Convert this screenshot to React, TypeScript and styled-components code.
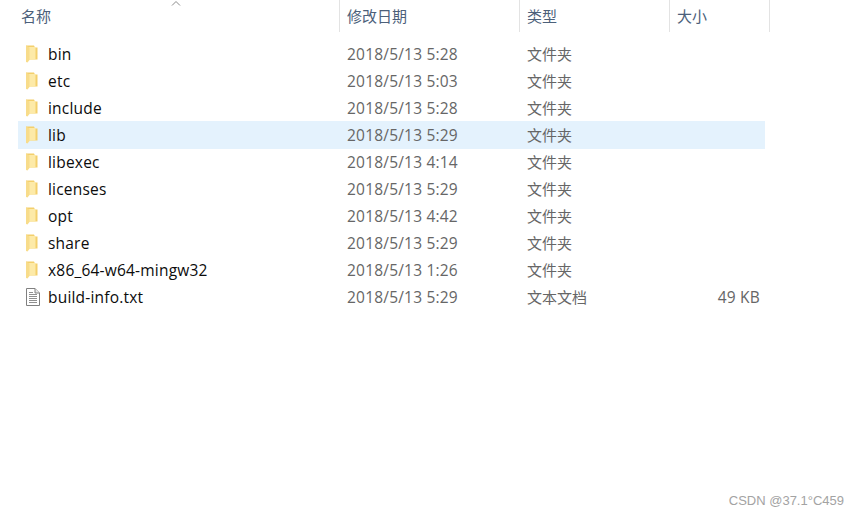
import styled, { createGlobalStyle } from "styled-components";

const GlobalStyle = createGlobalStyle`
  html, body {
    margin: 0;
    padding: 0;
    background: #ffffff;
  }
`;

const Page = styled.div`
  width: 859px;
  height: 515px;
  position: relative;
  overflow: hidden;
  background: #ffffff;
  font-family: "Open Sans", "Noto Sans CJK SC", sans-serif;
`;

const Header = styled.div`
  display: grid;
  grid-template-columns: 340px 180px 150px 100px;
  height: 32px;
`;

const HeaderCell = styled.div`
  border-right: 1px solid #e3e3e3;
  padding: 6px 0 0 7px;
  font-size: 15px;
  line-height: 20px;
  color: #4c607a;
`;

const FirstHeaderCell = styled(HeaderCell)`
  padding-left: 21px;
  position: relative;
`;

const SortArrow = styled.svg`
  position: absolute;
  left: 171px;
  top: 0;
`;

const List = styled.div`
  padding: 8px 0 0 18px;
  width: 747px;
`;

const Row = styled.div<{ $selected?: boolean }>`
  display: grid;
  grid-template-columns: 322px 180px 150px 95px;
  height: 27px;
  align-items: center;
  background: ${(props) => (props.$selected ? "#e4f2fd" : "transparent")};
  box-shadow: ${(props) => (props.$selected ? "0 1px 0 #e4f2fd" : "none")};
`;

const NameCell = styled.div`
  display: flex;
  align-items: center;
  gap: 8px;
  padding-left: 6px;
  font-size: 15.5px;
  letter-spacing: 0.2px;
  color: #0c0c0c;
`;

const InfoCell = styled.div`
  padding-left: 7px;
  font-size: 15.5px;
  letter-spacing: 0.2px;
  color: #666666;
`;

const TypeCell = styled(InfoCell)`
  font-size: 15px;
  letter-spacing: 0;
`;

const SizeCell = styled(InfoCell)`
  padding: 0 5px 0 0;
  text-align: right;
`;

const Watermark = styled.div`
  position: absolute;
  right: 15px;
  bottom: 6px;
  font-family: "Liberation Sans", sans-serif;
  font-size: 13px;
  line-height: 16px;
  color: #a3a3a3;
`;

const FolderIcon = () => (
  <svg width="16" height="18" viewBox="0 0 16 18">
    <path d="M2 .5 H10 L11 2.5 H13.5 V14.5 H2 Z" fill="#f3cf6c" />
    <path d="M4.5 2 H11.5 V14.5 H4.5 Z" fill="#fdeaa8" />
    <path d="M2 .5 L5.5 2.5 V15 L3.5 17.5 L2 17 Z" fill="#f8dc8a" />
  </svg>
);

const FileIcon = () => (
  <svg width="16" height="18" viewBox="0 0 16 18">
    <path d="M2.5 .5 H11 L15.5 5 V17.5 H2.5 Z" fill="#ffffff" stroke="#808080" />
    <path d="M11 .5 V5 H15.5" fill="#e8e8e8" stroke="#808080" />
    <path
      d="M5 4.5 H9 M5 6.5 H13 M5 8.5 H13 M5 10.5 H13 M5 12.5 H13 M5 14.5 H13"
      stroke="#8f8f8f"
    />
  </svg>
);

type Item = {
  name: string;
  date: string;
  type: string;
  size?: string;
  file?: boolean;
};

const items: Item[] = [
  { name: "bin", date: "2018/5/13 5:28", type: "文件夹" },
  { name: "etc", date: "2018/5/13 5:03", type: "文件夹" },
  { name: "include", date: "2018/5/13 5:28", type: "文件夹" },
  { name: "lib", date: "2018/5/13 5:29", type: "文件夹" },
  { name: "libexec", date: "2018/5/13 4:14", type: "文件夹" },
  { name: "licenses", date: "2018/5/13 5:29", type: "文件夹" },
  { name: "opt", date: "2018/5/13 4:42", type: "文件夹" },
  { name: "share", date: "2018/5/13 5:29", type: "文件夹" },
  { name: "x86_64-w64-mingw32", date: "2018/5/13 1:26", type: "文件夹" },
  {
    name: "build-info.txt",
    date: "2018/5/13 5:29",
    type: "文本文档",
    size: "49 KB",
    file: true,
  },
];

const App = () => {
  return (
    <Page>
      <GlobalStyle />
      <Header>
        <FirstHeaderCell>
          名称
          <SortArrow width="10" height="6" viewBox="0 0 10 6">
            <path d="M1 5.5 L5 1.5 L9 5.5" fill="none" stroke="#8a8a8a" />
          </SortArrow>
        </FirstHeaderCell>
        <HeaderCell>修改日期</HeaderCell>
        <HeaderCell>类型</HeaderCell>
        <HeaderCell>大小</HeaderCell>
      </Header>
      <List>
        {items.map((item) => (
          <Row key={item.name} $selected={item.name === "lib"}>
            <NameCell>
              {item.file ? <FileIcon /> : <FolderIcon />}
              {item.name}
            </NameCell>
            <InfoCell>{item.date}</InfoCell>
            <TypeCell>{item.type}</TypeCell>
            <SizeCell>{item.size}</SizeCell>
          </Row>
        ))}
      </List>
      <Watermark>CSDN @37.1°C459</Watermark>
    </Page>
  );
};

export default App;
